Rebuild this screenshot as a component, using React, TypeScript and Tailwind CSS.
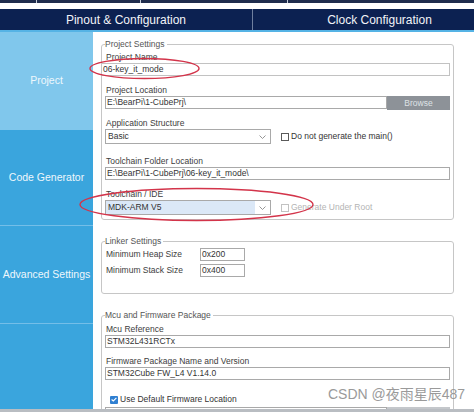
import React from "react";

interface BoxProps {
  value?: string;
  className?: string;
}

const Box = ({ value = "", className = "" }: BoxProps) => (
  <div
    className={`h-[13px] border border-[#a9a9a9] bg-white pl-[1px] flex items-center text-[8.5px] text-[#333] whitespace-nowrap overflow-hidden ${className}`}
  >
    {value}
  </div>
);

const Chevron = () => (
  <svg width="7" height="4" viewBox="0 0 7 4" fill="none">
    <polyline points="0.5,0.5 3.5,3.5 6.5,0.5" stroke="#8a8a8a" strokeWidth="0.9" />
  </svg>
);

const Select = ({ value, selected = false }: { value: string; selected?: boolean }) => (
  <div className="w-[166px] h-[15px] border border-[#a9a9a9] bg-white flex text-[8.5px] text-[#333]">
    <div className={`flex-1 flex items-center pl-[2px] ${selected ? "bg-[#dbe8f7]" : ""}`}>{value}</div>
    <div className="w-[15px] flex items-center justify-center">
      <Chevron />
    </div>
  </div>
);

const Check = ({ label, disabled = false }: { label: string; disabled?: boolean }) => (
  <div className="ml-[10px] flex items-center">
    <div
      className={`w-[8px] h-[8px] border bg-white ${disabled ? "border-[#c2c2c2]" : "border-[#5a5a5a]"}`}
    />
    <span className={`ml-[2px] text-[8.5px] ${disabled ? "text-[#b4b4b4]" : "text-[#333]"}`}>{label}</span>
  </div>
);

const Label = ({ text, className = "" }: { text: string; className?: string }) => (
  <div className={`pl-[1px] text-[8.5px] leading-[11px] text-[#3d3d3d] whitespace-nowrap ${className}`}>{text}</div>
);

const Group = ({
  title,
  className = "",
  children,
}: {
  title: string;
  className?: string;
  children: React.ReactNode;
}) => (
  <fieldset className={`w-[353px] shrink-0 border border-[#c6c6c6] rounded-[3px] px-[3px] ${className}`}>
    <legend className="pr-[2px] text-[8.5px] leading-[10px] text-[#555]">{title}</legend>
    {children}
  </fieldset>
);

export default function App() {
  return (
    <div className="relative w-[474px] h-[412px] overflow-hidden bg-white flex flex-col font-['Liberation_Sans','Noto_Sans_CJK_SC',sans-serif]">
      {/* top strip */}
      <div className="h-[3px] flex bg-[#1f2d4e]">
        <div className="w-[36px]" />
        <div className="w-[1px] bg-[#c9d0dc]" />
        <div className="w-[103px]" />
        <div className="w-[1px] bg-[#c9d0dc]" />
        <div className="w-[146px]" />
        <div className="w-[1px] bg-[#c9d0dc]" />
      </div>
      <div className="h-[6px] bg-white" />

      {/* tab bar */}
      <div className="h-[21px] flex bg-[#0c2151] text-[12px] text-[#f2f4f8] overflow-hidden">
        <div className="w-[253px] shrink-0 flex items-center justify-center border-r border-[#6f7f9f]">
          Pinout &amp; Configuration
        </div>
        <div className="w-[253px] shrink-0 flex items-center justify-center">Clock Configuration</div>
      </div>
      <div className="h-[2px] bg-[#55b3e5]" />

      <div className="h-[377px] flex">
        {/* sidebar */}
        <div className="w-[93px] shrink-0 flex flex-col text-[10.5px] text-[#eef7fc]">
          <div className="h-[98px] bg-[#80c7ec] flex items-center justify-center">Project</div>
          <div className="h-[96px] bg-[#3aa5dd] border-b border-[#74bee8] flex items-center justify-center">
            Code Generator
          </div>
          <div className="h-[98px] bg-[#3aa5dd] border-b border-[#74bee8] flex items-center justify-center">
            Advanced Settings
          </div>
          <div className="flex-1 bg-[#3aa5dd]" />
        </div>

        {/* main */}
        <div className="flex-1 bg-white pl-[8px] overflow-hidden flex flex-col">
          <Group title="Project Settings" className="mt-[7px] pb-[4px]">
            <Label text="Project Name" className="mt-[3px]" />
            <Box value="06-key_it_mode" className="ml-[-3px] border-l-0 border-[#c2c2c2]" />
            <Label text="Project Location" className="mt-[9px]" />
            <div className="flex items-start">
              <Box value="E:\BearPi\1-CubePrj\" className="flex-1" />
              <div className="w-[63px] h-[14px] bg-[#8d9298] flex items-center justify-center text-[8.5px] text-[#dfe2e6]">
                Browse
              </div>
            </div>
            <Label text="Application Structure" className="mt-[8px]" />
            <div className="flex items-center">
              <Select value="Basic" />
              <Check label="Do not generate the main()" />
            </div>
            <Label text="Toolchain Folder Location" className="mt-[12px]" />
            <Box value="E:\BearPi\1-CubePrj\06-key_it_mode\" />
            <Label text="Toolchain / IDE" className="mt-[9px]" />
            <div className="flex items-center">
              <Select value="MDK-ARM V5" selected />
              <Check label="Generate Under Root" disabled />
            </div>
          </Group>

          <Group title="Linker Settings" className="mt-[16px] pb-[16px]">
            <div className="mt-[2px] h-[13px] flex items-center">
              <Label text="Minimum Heap Size" className="w-[95px]" />
              <Box value="0x200" className="w-[45px]" />
            </div>
            <div className="mt-[3px] h-[13px] flex items-center">
              <Label text="Minimum Stack Size" className="w-[95px]" />
              <Box value="0x400" className="w-[45px]" />
            </div>
          </Group>

          <Group title="Mcu and Firmware Package" className="mt-[16px] pb-[20px]">
            <Label text="Mcu Reference" className="mt-[4px]" />
            <Box value="STM32L431RCTx" />
            <Label text="Firmware Package Name and Version" className="mt-[8px]" />
            <Box value="STM32Cube FW_L4 V1.14.0" />
            <div className="mt-[14px] h-[11px] flex items-center pl-[5px]">
              <div className="w-[8px] h-[8px] rounded-[1px] bg-[#2f7fd1] flex items-center justify-center">
                <svg width="6" height="5" viewBox="0 0 6 5" fill="none">
                  <polyline points="0.6,2.5 2.3,4 5.4,0.8" stroke="#fff" strokeWidth="1.1" />
                </svg>
              </div>
              <span className="ml-[2px] text-[8.5px] text-[#333]">Use Default Firmware Location</span>
            </div>
            <div className="mt-[2px] flex items-start">
              <Box className="flex-1" />
              <div className="w-[63px] h-[14px] bg-[#c4c7cb]" />
            </div>
          </Group>
        </div>
      </div>

      <div className="h-[3px] bg-[#b9bdc2]" />

      {/* annotations */}
      <svg className="absolute inset-0 pointer-events-none" width="474" height="412" viewBox="0 0 474 412">
        <ellipse cx="144.5" cy="68.5" rx="54.5" ry="10" fill="none" stroke="#d3344a" strokeWidth="1.4" />
        <ellipse cx="196.5" cy="204.5" rx="116.5" ry="16" fill="none" stroke="#d3344a" strokeWidth="1.4" />
      </svg>

      <div className="absolute left-[328px] top-[385px] text-[14px] leading-[18px] text-[#9a9a9a] whitespace-nowrap pointer-events-none">
        CSDN @夜雨星辰487
      </div>
    </div>
  );
}
